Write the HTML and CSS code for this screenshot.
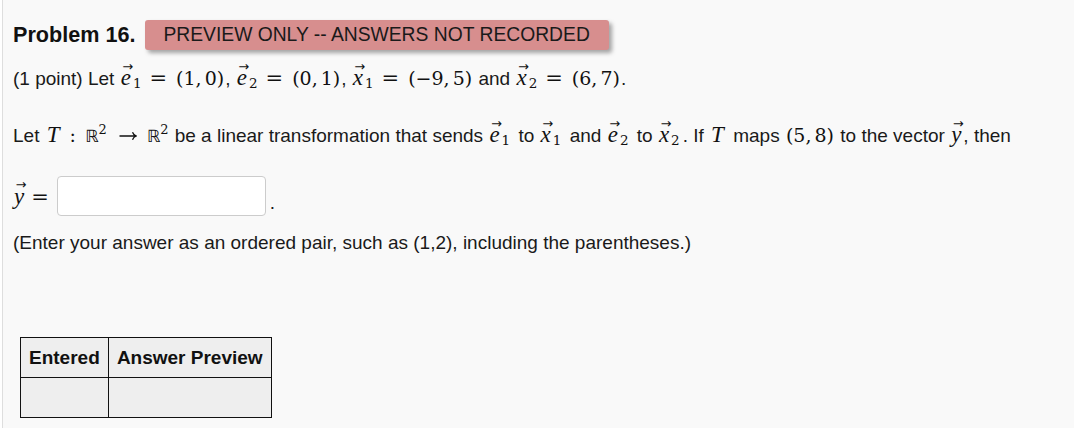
FILE: index.html
```html
<!DOCTYPE html>
<html lang="en">
<head>
    <meta charset="UTF-8">
    <title>Problem 16</title>
    <link rel="stylesheet" href="styles.css">
</head>
<body>
    <div class="problem">
        <!-- Pealkiri -->
        <div class="problem-header">
            <span class="problem-num">Problem 16.</span>
            <span class="badge">PREVIEW ONLY -- ANSWERS NOT RECORDED</span>
        </div>

        <p class="line first">(1 point) Let
            <span class="m"><span class="vec">e</span><sub>1</sub><span class="rel">=</span>(1,<span class="th"></span>0)</span>,
            <span class="m"><span class="vec">e</span><sub>2</sub><span class="rel">=</span>(0,<span class="th"></span>1)</span>,
            <span class="m"><span class="vec">x</span><sub>1</sub><span class="rel">=</span>(&minus;9,<span class="th"></span>5)</span> and
            <span class="m"><span class="vec">x</span><sub>2</sub><span class="rel">=</span>(6,<span class="th"></span>7)</span>.
        </p>

        <p class="line second">Let <span class="m"><i>T</i><span class="colon">:</span><span class="bb">&#8477;</span><sup>2</sup><svg class="to" width="18" height="10" viewBox="0 0 18 10"><path d="M0.5 5H17M13.5 1.2Q14.5 4 17.3 5Q14.5 6 13.5 8.8" stroke="#111" stroke-width="1.3" fill="none"/></svg><span class="bb">&#8477;</span><sup>2</sup></span>
            be a linear transformation that sends <span class="m"><span class="vec">e</span><sub>1</sub></span> to
            <span class="m"><span class="vec">x</span><sub>1</sub></span> and <span class="m"><span class="vec">e</span><sub>2</sub></span>
            to <span class="m"><span class="vec">x</span><sub>2</sub></span>. If <span class="m"><i>T</i></span> maps
            <span class="m">(5,<span class="th"></span>8)</span> to the vector <span class="m"><span class="vec">y</span></span>, then
        </p>

        <div class="answer-row">
            <span class="m"><span class="vec">y</span><span class="rel tight">=</span></span>
            <input type="text" class="answer-input">
            <span class="dot">.</span>
        </div>

        <p class="line hint">(Enter your answer as an ordered pair, such as (1,2), including the parentheses.)</p>

        <!-- Eelvaate tabel -->
        <table class="preview">
            <tr>
                <th>Entered</th>
                <th>Answer Preview</th>
            </tr>
            <tr>
                <td class="c1"></td>
                <td class="c2"></td>
            </tr>
        </table>
    </div>
</body>
</html>
```

FILE: styles.css
```css
body {
    margin: 0;
    background: #fff;
    font-family: "Liberation Sans", Arial, sans-serif;
    color: #1a1a1a;
}
.problem {
    margin-left: 2px;
    border-left: 1px solid #dedede;
    background: #f9f9f9;
    padding: 20px 10px 12px 10px;
    height: 396px;
}
.problem-header {
    display: flex;
    align-items: center;
    gap: 10px;
}
.problem-num {
    font-weight: bold;
    font-size: 21.6px;
    color: #111;
}
.badge {
    background: #d78e8e;
    color: #1a1a1a;
    font-size: 19.3px;
    padding: 0 19px 0 18px;
    height: 30px;
    line-height: 30px;
    border-radius: 3px;
    box-shadow: 3px 3px 4px rgba(0, 0, 0, 0.35);
}
.line {
    font-size: 19px;
    line-height: 26px;
    margin: 0;
}
.first {
    margin-top: 16px;
}
.second {
    margin-top: 31px;
}
.m {
    font-family: "DejaVu Serif", "Liberation Serif", serif;
    font-size: 19px;
    line-height: 1;
    white-space: nowrap;
    color: #111;
    margin: 0 1px;
}
.m i,
.vec {
    font-family: "Liberation Serif", "Times New Roman", serif;
    font-style: italic;
    font-size: 23px;
}
.m i {
    margin: 0 3px 0 1px;
}
.rel {
    display: inline-block;
    font-size: 21px;
    margin: 0 9px 0 6px;
}
.tight {
    margin: 0 7px 0 6px;
}
.colon {
    display: inline-block;
    margin: 0 9px 0 7px;
}
.to {
    margin: 0 10px 0 12px;
    vertical-align: 1px;
}
.th {
    display: inline-block;
    width: 3px;
}
.vec {
    position: relative;
    display: inline-block;
    padding-right: 1px;
}
.vec::before {
    content: "\2192";
    position: absolute;
    left: 0.14em;
    top: -0.42em;
    font-family: "DejaVu Sans", sans-serif;
    font-style: normal;
    font-size: 0.56em;
}
.m sub {
    font-size: 13.5px;
    line-height: 0;
    vertical-align: -0.25em;
    margin: 0 2px 0 1px;
}
.m sup {
    font-size: 13px;
    line-height: 0;
    vertical-align: 0.65em;
}
.bb {
    font-family: "DejaVu Sans", sans-serif;
    font-size: 17px;
}
.answer-row {
    display: flex;
    align-items: center;
    margin-top: 27px;
}
.answer-input {
    width: 209px;
    height: 40px;
    box-sizing: border-box;
    border: 1px solid #ccc;
    border-radius: 4px;
    background: #fff;
}
.dot {
    font-size: 19px;
    align-self: flex-end;
    margin: 0 0 2px 4px;
}
.hint {
    margin-top: 14px;
}
.preview {
    margin-top: 81px;
    margin-left: 7px;
    border-collapse: collapse;
    background: #eee;
}
.preview th,
.preview td {
    border: 1.5px solid #111;
    height: 40px;
    box-sizing: border-box;
    padding: 0 8px;
    font-size: 19px;
}
.preview th {
    font-weight: bold;
    color: #111;
}
.c1 {
    width: 86px;
}
.c2 {
    width: 163px;
}
```
